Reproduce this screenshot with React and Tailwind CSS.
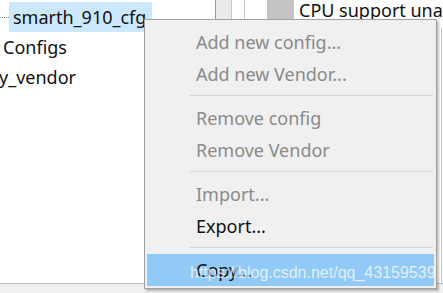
import React from 'react';

const font = { fontFamily: '"Noto Sans", "Open Sans", Arial, sans-serif' };

function MenuItem({ label, disabled, active }) {
  return (
    <div
      className={`h-[32px] flex items-center pl-[49px] text-[18px] ${
        active ? 'bg-[#91c9f7]' : ''
      } ${disabled ? 'text-[#8a8a8a]' : 'text-[#111]'}`}
    >
      {label}
    </div>
  );
}

function Separator() {
  return (
    <div className="pt-[5px] pb-[6px] pl-[43px] pr-[1px]">
      <div className="h-px bg-[#d5d5d5]" />
    </div>
  );
}

export default function App() {
  return (
    <div className="relative w-[443px] h-[293px] overflow-hidden bg-[#f0f0f0]" style={font}>
      {/* background window */}
      <div className="flex h-[284px] border-b border-[#bdbdbd] bg-white">
        {/* tree panel */}
        <div className="w-[216px] shrink-0 border-r border-[#9a9a9a] flex flex-col text-[18px] text-[#111]">
          <div className="flex items-center h-[30px] mt-[2px]">
            <div className="w-[9px] border-t border-dotted border-[#999]" />
            <div className="h-full flex items-center bg-[#cce8ff] pl-[4px] w-[143px] whitespace-nowrap">smarth_910_cfg</div>
          </div>
          <div className="h-[30px] flex items-center pl-[3px]">Configs</div>
          <div className="h-[30px] flex items-center -ml-[1px]">y_vendor</div>
        </div>
        {/* list header columns */}
        <div className="flex-1 min-w-0 flex items-start overflow-hidden">
          <div className="w-[16px] shrink-0 h-[20px] bg-[#ebebeb] border-r border-[#c8c8c8]" />
          <div className="w-[13px] shrink-0 h-[20px] border-r border-[#c8c8c8]" />
          <div className="w-[22px] shrink-0 h-[20px]" />
          <div className="w-[27px] shrink-0 h-[20px] bg-[#c4c4c4]" />
          <div className="pl-[5px] h-[20px] flex items-center text-[18px] text-[#111] whitespace-nowrap">
            CPU support una
          </div>
        </div>
      </div>

      {/* faint edge at the right, beyond the menu */}
      <div className="absolute left-[441px] top-[28px] w-px h-[256px] bg-[#c8c8c8]" />

      {/* context menu */}
      <div className="absolute left-[144px] top-[19px] w-[293px] h-[270px] bg-[#f0f0f0] border border-[#a0a0a0] shadow-[2px_2px_2px_rgba(0,0,0,0.25)] px-[2px] pt-[6px]">
        <MenuItem label="Add new config..." disabled />
        <MenuItem label="Add new Vendor..." disabled />
        <Separator />
        <MenuItem label="Remove config" disabled />
        <MenuItem label="Remove Vendor" disabled />
        <Separator />
        <MenuItem label="Import..." disabled />
        <MenuItem label="Export..." />
        <Separator />
        <MenuItem label="Copy..." active />
      </div>

      {/* watermark */}
      <div
        className="absolute left-[190px] top-[261px] text-[16px] text-white/75 whitespace-nowrap"
        style={{ fontFamily: '"Liberation Sans", Arial, sans-serif' }}
      >
        https://blog.csdn.net/qq_43159539
      </div>
    </div>
  );
}
